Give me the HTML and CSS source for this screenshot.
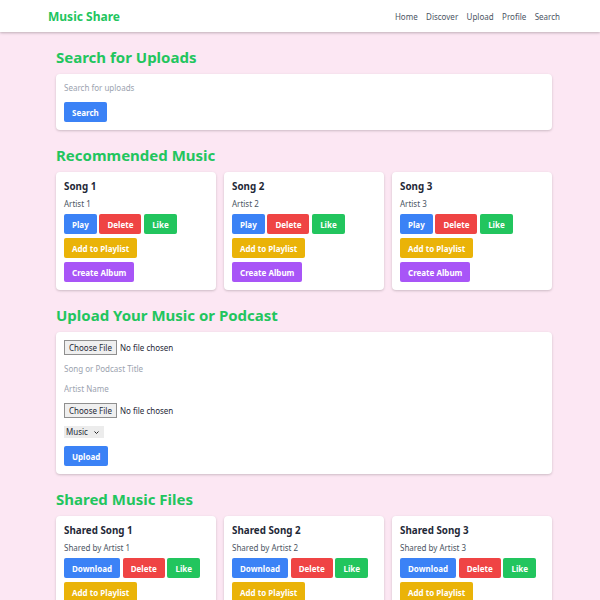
FILE: index.html
```html
<!DOCTYPE html>
<html lang="en">
<head>
<meta charset="utf-8">
<title>Music Share</title>
<link rel="stylesheet" href="styles.css">
</head>
<body>
<header class="topbar">
  <div class="topbar-inner">
    <div class="logo">Music Share</div>
    <nav class="nav">
      <a href="#">Home</a>
      <a href="#">Discover</a>
      <a href="#">Upload</a>
      <a href="#">Profile</a>
      <a href="#">Search</a>
    </nav>
  </div>
</header>
<main class="main">
  <section class="section">
    <h2 class="section-title">Search for Uploads</h2>
    <div class="panel">
      <input class="text-input" type="text" placeholder="Search for uploads">
      <div class="row"><button class="btn btn-blue">Search</button></div>
    </div>
  </section>

  <section class="section">
    <h2 class="section-title">Recommended Music</h2>
    <div class="grid">
      <div class="card">
        <h3 class="card-title">Song 1</h3>
        <p class="card-sub">Artist 1</p>
        <div class="btn-row"><button class="btn btn-blue">Play</button><button class="btn btn-red">Delete</button><button class="btn btn-green">Like</button></div>
        <div class="btn-row"><button class="btn btn-yellow">Add to Playlist</button></div>
        <div class="btn-row"><button class="btn btn-purple">Create Album</button></div>
      </div>
      <div class="card">
        <h3 class="card-title">Song 2</h3>
        <p class="card-sub">Artist 2</p>
        <div class="btn-row"><button class="btn btn-blue">Play</button><button class="btn btn-red">Delete</button><button class="btn btn-green">Like</button></div>
        <div class="btn-row"><button class="btn btn-yellow">Add to Playlist</button></div>
        <div class="btn-row"><button class="btn btn-purple">Create Album</button></div>
      </div>
      <div class="card">
        <h3 class="card-title">Song 3</h3>
        <p class="card-sub">Artist 3</p>
        <div class="btn-row"><button class="btn btn-blue">Play</button><button class="btn btn-red">Delete</button><button class="btn btn-green">Like</button></div>
        <div class="btn-row"><button class="btn btn-yellow">Add to Playlist</button></div>
        <div class="btn-row"><button class="btn btn-purple">Create Album</button></div>
      </div>
    </div>
  </section>

  <section class="section">
    <h2 class="section-title">Upload Your Music or Podcast</h2>
    <form class="panel upload-form">
      <input class="file-input" type="file">
      <input class="text-input" type="text" placeholder="Song or Podcast Title">
      <input class="text-input" type="text" placeholder="Artist Name">
      <input class="file-input" type="file">
      <div class="row">
        <div class="select-wrap">
          <select class="select"><option>Music</option><option>Podcast</option></select>
          <svg class="select-chevron" width="5" height="3" viewBox="0 0 5 3" aria-hidden="true"><path d="M0.5 0.5 L2.5 2.5 L4.5 0.5" fill="none" stroke="#222" stroke-width="1"/></svg>
        </div>
      </div>
      <div class="row"><button type="button" class="btn btn-blue">Upload</button></div>
    </form>
  </section>

  <section class="section">
    <h2 class="section-title">Shared Music Files</h2>
    <div class="grid">
      <div class="card">
        <h3 class="card-title">Shared Song 1</h3>
        <p class="card-sub">Shared by Artist 1</p>
        <div class="btn-row"><button class="btn btn-blue">Download</button><button class="btn btn-red">Delete</button><button class="btn btn-green">Like</button></div>
        <div class="btn-row"><button class="btn btn-yellow">Add to Playlist</button></div>
      </div>
      <div class="card">
        <h3 class="card-title">Shared Song 2</h3>
        <p class="card-sub">Shared by Artist 2</p>
        <div class="btn-row"><button class="btn btn-blue">Download</button><button class="btn btn-red">Delete</button><button class="btn btn-green">Like</button></div>
        <div class="btn-row"><button class="btn btn-yellow">Add to Playlist</button></div>
      </div>
      <div class="card">
        <h3 class="card-title">Shared Song 3</h3>
        <p class="card-sub">Shared by Artist 3</p>
        <div class="btn-row"><button class="btn btn-blue">Download</button><button class="btn btn-red">Delete</button><button class="btn btn-green">Like</button></div>
        <div class="btn-row"><button class="btn btn-yellow">Add to Playlist</button></div>
      </div>
    </div>
  </section>
</main>
</body>
</html>
```

FILE: styles.css
```css
* { box-sizing: border-box; }
html, body { margin: 0; padding: 0; }
body {
  background: #fce7f3;
  font-family: "Noto Sans", "Open Sans", sans-serif;
  color: #1f2937;
}
.topbar {
  background: #ffffff;
  height: 32px;
  box-shadow: 0 1px 3px rgba(0,0,0,0.16), 0 1px 2px rgba(0,0,0,0.1);
}
.topbar-inner {
  height: 32px;
  padding: 0 40px 0 48px;
  display: flex;
  align-items: center;
  justify-content: space-between;
}
.logo {
  color: #22c55e;
  font-weight: 700;
  font-size: 12px;
}
.nav { display: flex; gap: 8.4px; }
.nav a {
  color: #4b5563;
  text-decoration: none;
  font-size: 8px;
}
.main {
  padding: 14px 48px 20px 56px;
}
.section { margin-bottom: 14px; }
.section-title {
  margin: 0 0 6px 0;
  color: #22c55e;
  font-size: 15px;
  line-height: 22px;
  font-weight: 700;
}
.panel {
  background: #ffffff;
  border-radius: 4px;
  padding: 8px;
  box-shadow: 0 1px 3px rgba(0,0,0,0.12), 0 1px 2px rgba(0,0,0,0.08);
  display: flex;
  flex-direction: column;
  gap: 8px;
}
.row { display: flex; }
.text-input {
  display: block;
  border: 0;
  outline: none;
  padding: 0;
  height: 12px;
  line-height: 12px;
  font-family: inherit;
  font-size: 8px;
  color: #1f2937;
  background: transparent;
}
.text-input::placeholder { color: #9ca3af; }
.file-input {
  display: block;
  font-family: inherit;
  font-size: 8px;
  line-height: 11px;
  color: #1f2937;
  height: 15px;
}
.file-input::file-selector-button {
  font-family: inherit;
  font-size: 8px;
  height: 15px;
  padding: 0 4px;
  margin-right: 3px;
  border: 1px solid #8f8f8f;
  border-radius: 0;
  background: #efefef;
  color: #1f2937;
}
.select-wrap {
  position: relative;
  width: 40px;
  height: 12px;
}
.select {
  -webkit-appearance: none;
  appearance: none;
  display: block;
  font-family: inherit;
  font-size: 8px;
  line-height: 12px;
  height: 12px;
  width: 40px;
  border: 0;
  border-radius: 0;
  background-color: #ececec;
  color: #1f2937;
  padding: 0 0 0 2px;
  outline: none;
}
.select-chevron {
  position: absolute;
  right: 5px;
  top: 5px;
  pointer-events: none;
}
.grid {
  display: grid;
  grid-template-columns: repeat(3, 1fr);
  gap: 8px;
}
.card {
  background: #ffffff;
  border-radius: 4px;
  padding: 8px;
  box-shadow: 0 1px 3px rgba(0,0,0,0.12), 0 1px 2px rgba(0,0,0,0.08);
}
.card-title {
  margin: 0 0 4px 0;
  font-size: 9.8px;
  line-height: 14px;
  font-weight: 700;
  color: #1f2937;
}
.card-sub {
  margin: 0 0 4px 0;
  font-size: 8px;
  line-height: 12px;
  color: #4b5563;
}
.btn-row { display: flex; gap: 2.7px; margin-bottom: 4px; }
.btn-row:last-child { margin-bottom: 0; }
.btn {
  border: 0;
  border-radius: 2px;
  height: 20px;
  padding: 0 8px;
  font-family: inherit;
  font-size: 8px;
  font-weight: 700;
  color: #ffffff;
  cursor: pointer;
}
.btn-blue { background: #3b82f6; }
.btn-red { background: #ef4444; }
.btn-green { background: #22c55e; }
.btn-yellow { background: #eab308; }
.btn-purple { background: #a855f7; }
```
